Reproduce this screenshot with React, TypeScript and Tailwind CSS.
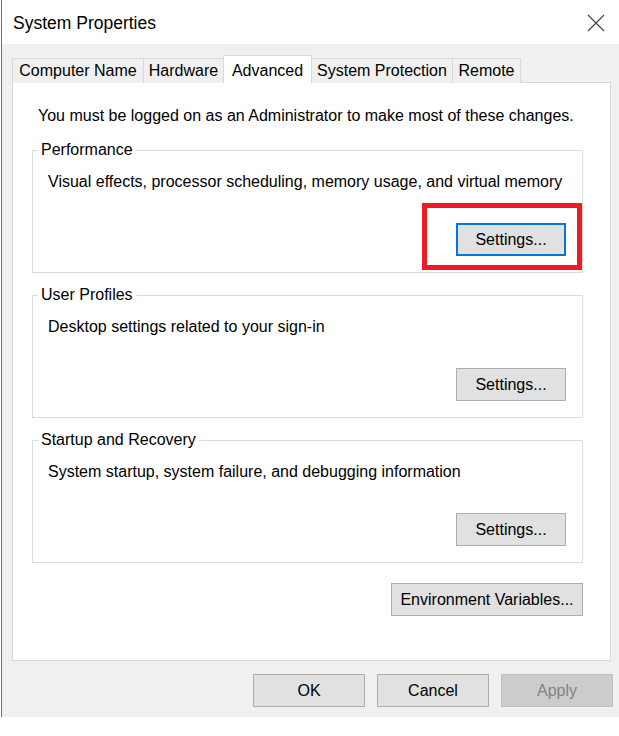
import React from "react";

const FONT = { fontFamily: '"Liberation Sans", Arial, sans-serif' };

function WinButton({
  label,
  className = "",
  focused = false,
  disabled = false,
}: {
  label: string;
  className?: string;
  focused?: boolean;
  disabled?: boolean;
}) {
  const base = "flex items-center justify-center text-[16px] border";
  const look = disabled
    ? "bg-[#cccccc] border-[#bfbfbf] text-[#838383]"
    : focused
    ? "bg-[#e1e1e1] border-[#0078d7] border-2 text-black"
    : "bg-[#e1e1e1] border-[#adadad] text-black";
  return <div className={`${base} ${look} ${className}`}>{label}</div>;
}

function Group({
  title,
  desc,
  highlight = false,
}: {
  title: string;
  desc: string;
  highlight?: boolean;
}) {
  return (
    <div className="relative h-[123px] border border-[#dcdcdc] flex flex-col">
      <div className="absolute -top-[10px] left-[5px] bg-white px-[3px] text-[16px] leading-[18px] text-black">
        {title}
      </div>
      <div className="pl-[15px] pt-[22px] text-[16px] leading-[18px] text-black">{desc}</div>
      <div className="flex justify-end pr-[16px] mt-[32px]">
        <WinButton label="Settings..." focused={highlight} className="w-[110px] h-[33px]" />
      </div>
      {highlight && (
        <div className="absolute left-[389px] top-[52px] w-[160px] h-[67px] border-[5px] border-[#ed1c24]" />
      )}
    </div>
  );
}

const TABS = [
  { label: "Computer Name", w: "w-[132px]" },
  { label: "Hardware", w: "w-[81px]" },
  { label: "Advanced", w: "w-[89px]", active: true },
  { label: "System Protection", w: "w-[142px]" },
  { label: "Remote", w: "w-[69px]" },
];

export default function App() {
  return (
    <div className="w-[619px] h-[736px] bg-white overflow-hidden" style={FONT}>
      <div className="ml-px w-[618px] h-[717px] border-l border-[#2b84d8] flex flex-col">
        {/* title bar */}
        <div className="h-[44px] bg-white flex items-center justify-between pl-[11px] pr-[13px] pt-[2px]">
          <span className="text-[17.5px] text-[#000]">System Properties</span>
          <svg width="18" height="18" viewBox="0 0 18 18" className="mr-[1px]">
            <path d="M1 1 L17 17 M17 1 L1 17" stroke="#444" strokeWidth="1.2" />
          </svg>
        </div>

        {/* body */}
        <div className="flex-1 bg-[#f0f0f0] pl-[10px] pt-[11px] flex flex-col">
          {/* tabs */}
          <div className="flex items-end h-[28px] relative z-10">
            {TABS.map((t, i) =>
              t.active ? (
                <div
                  key={t.label}
                  className={`${t.w} h-[28px] -ml-px bg-white border border-b-0 border-[#d9d9d9] flex items-start justify-center pt-[3px] text-[16px] text-black`}
                >
                  {t.label}
                </div>
              ) : (
                <div
                  key={t.label}
                  className={`${t.w} h-[25px] ${i === 0 ? "" : "-ml-px"} bg-[#f0f0f0] border border-b-0 border-[#d9d9d9] flex items-center justify-center text-[16px] text-black`}
                >
                  {t.label}
                </div>
              )
            )}
          </div>

          {/* panel */}
          <div className="-mt-px w-[599px] h-[579px] bg-white border border-[#d9d9d9] flex flex-col px-[19px]">
            <div className="pl-[6px] pt-[24px] text-[16px] leading-[18px] text-black">
              You must be logged on as an Administrator to make most of these changes.
            </div>
            <div className="mt-[25px] w-[551px] flex flex-col gap-[22px]">
              <Group
                title="Performance"
                desc="Visual effects, processor scheduling, memory usage, and virtual memory"
                highlight
              />
              <Group title="User Profiles" desc="Desktop settings related to your sign-in" />
              <Group
                title="Startup and Recovery"
                desc="System startup, system failure, and debugging information"
              />
            </div>
            <div className="w-[551px] flex justify-end mt-[20px]">
              <WinButton label="Environment Variables..." className="w-[192px] h-[33px]" />
            </div>
          </div>

          {/* footer buttons */}
          <div className="flex justify-end gap-[12px] pr-[6px] mt-[13px]">
            <WinButton label="OK" className="w-[112px] h-[33px]" />
            <WinButton label="Cancel" className="w-[112px] h-[33px]" />
            <WinButton label="Apply" disabled className="w-[112px] h-[33px]" />
          </div>
        </div>
      </div>
    </div>
  );
}
